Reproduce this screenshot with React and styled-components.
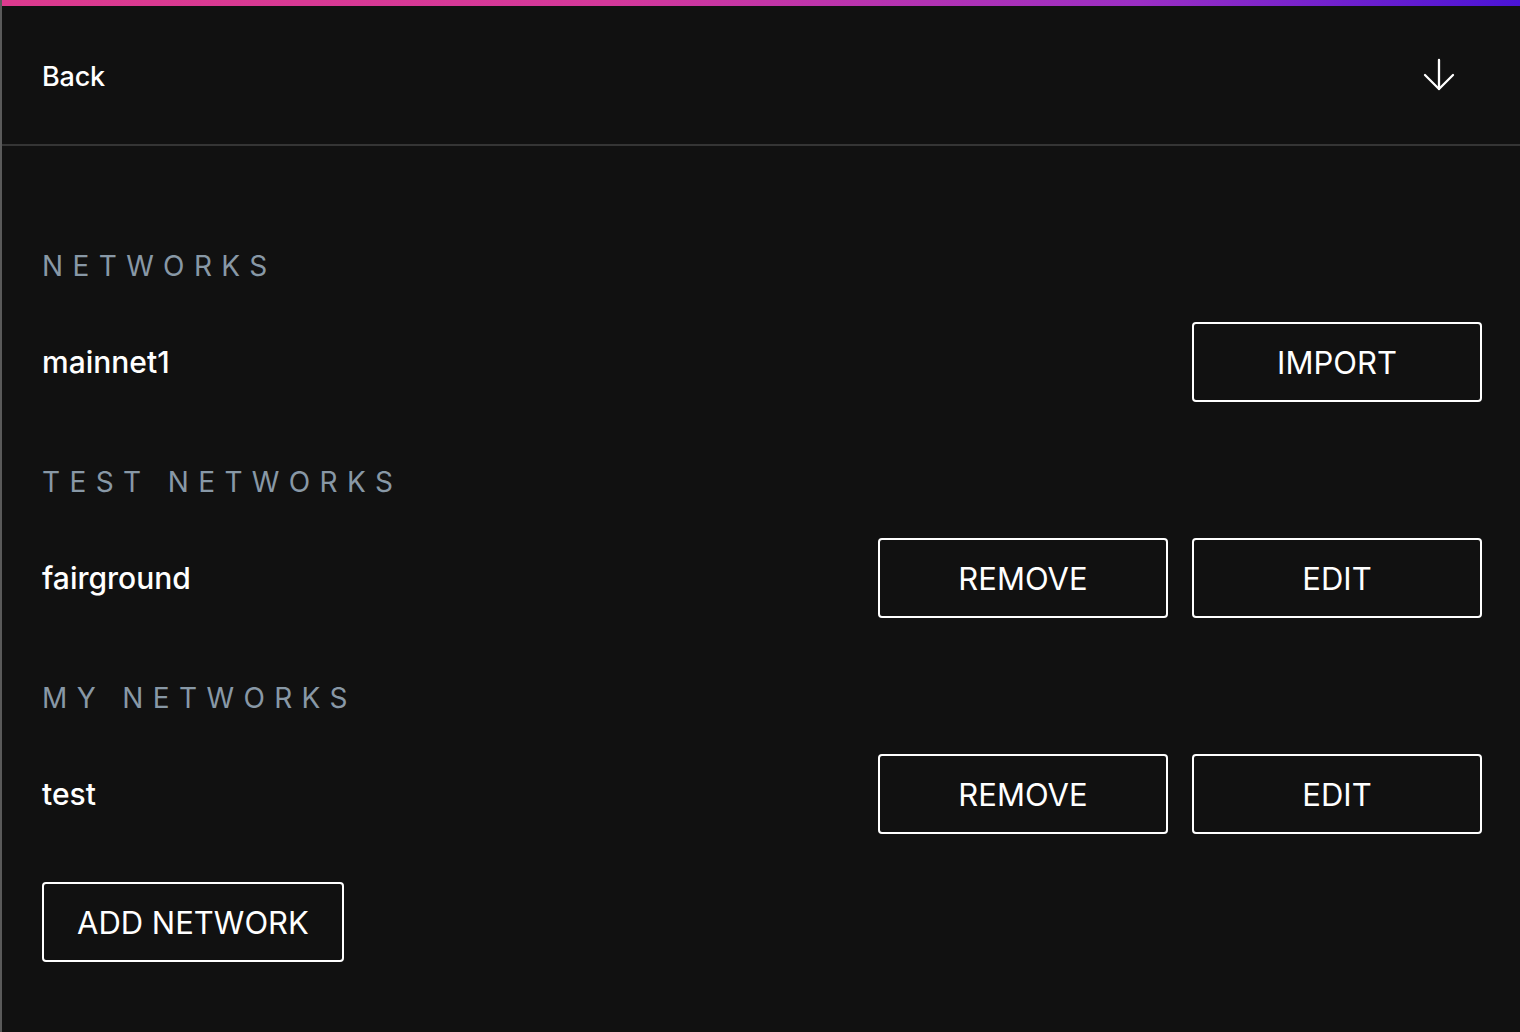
import React from "react";
import styled, { createGlobalStyle } from "styled-components";

const Global = createGlobalStyle`
  html, body { margin: 0; padding: 0; background: #111111; }
  body { font-family: Inter, "Noto Sans", sans-serif; color: #ffffff; }
  * { box-sizing: border-box; }
`;

const Page = styled.div`
  min-height: 1032px;
  background: #111111;
  border-left: 2px solid #5a5a5a;
  display: flex;
  flex-direction: column;
`;

const TopBar = styled.div`
  height: 6px;
  background: linear-gradient(90deg, #dc3a8e 0%, #d4389a 40%, #9b2ec4 75%, #4a14d6 100%);
`;

const Header = styled.header`
  height: 140px;
  display: flex;
  align-items: center;
  justify-content: space-between;
  padding: 0 64px 0 40px;
  border-bottom: 2px solid #353535;
`;

const BackLink = styled.a`
  font-size: 27px;
  font-weight: 500;
  color: #ffffff;
  letter-spacing: -0.2px;
  cursor: pointer;
  margin-top: 2px;
`;

const IconButton = styled.button`
  background: none;
  border: none;
  padding: 0;
  width: 34px;
  height: 34px;
  display: flex;
  align-items: center;
  justify-content: center;
  color: #ffffff;
  cursor: pointer;
`;

const Content = styled.main`
  padding: 102px 38px 0 40px;
  display: flex;
  flex-direction: column;
`;

const Section = styled.section`
  display: flex;
  flex-direction: column;
  margin-bottom: 62px;
`;

const Heading = styled.h2`
  margin: 0 0 38px 0;
  font-size: 28px;
  line-height: 36px;
  font-weight: 400;
  letter-spacing: 0.335em;
  color: #8898a6;
  text-transform: uppercase;
`;

const Row = styled.div`
  display: flex;
  align-items: center;
  justify-content: space-between;
  height: 80px;
`;

const Name = styled.span`
  font-size: 30px;
  font-weight: 500;
  color: #ffffff;
`;

const Actions = styled.div`
  display: flex;
  gap: 24px;
`;

const Button = styled.button`
  height: 80px;
  width: ${(p) => (p.$auto ? "auto" : "290px")};
  padding: 0 ${(p) => (p.$auto ? "33px" : "0")};
  background: transparent;
  border: 2px solid #ffffff;
  border-radius: 4px;
  color: #ffffff;
  font-family: Inter, "Noto Sans", sans-serif;
  font-size: 31px;
  font-weight: 400;
  cursor: pointer;
`;

const Footer = styled.div`
  display: flex;
  margin-top: -14px;
`;

const ArrowDown = () => (
  <svg width="32" height="34" viewBox="0 0 32 34" fill="none" stroke="currentColor" strokeWidth="2.3" strokeLinecap="round" strokeLinejoin="round">
    <path d="M16 2v29" />
    <path d="M2 17l14 14 14-14" />
  </svg>
);

const sections = [
  { title: "Networks", items: [{ name: "mainnet1", actions: ["Import"] }] },
  { title: "Test networks", items: [{ name: "fairground", actions: ["Remove", "Edit"] }] },
  { title: "My networks", items: [{ name: "test", actions: ["Remove", "Edit"] }] },
];

export default function App() {
  return (
    <>
      <Global />
      <Page>
        <TopBar />
        <Header>
          <BackLink>Back</BackLink>
          <IconButton aria-label="Collapse">
            <ArrowDown />
          </IconButton>
        </Header>
        <Content>
          {sections.map((s) => (
            <Section key={s.title}>
              <Heading>{s.title}</Heading>
              {s.items.map((it) => (
                <Row key={it.name}>
                  <Name>{it.name}</Name>
                  <Actions>
                    {it.actions.map((a) => (
                      <Button key={a}>{a.toUpperCase()}</Button>
                    ))}
                  </Actions>
                </Row>
              ))}
            </Section>
          ))}
          <Footer>
            <Button $auto>ADD NETWORK</Button>
          </Footer>
        </Content>
      </Page>
    </>
  );
}
